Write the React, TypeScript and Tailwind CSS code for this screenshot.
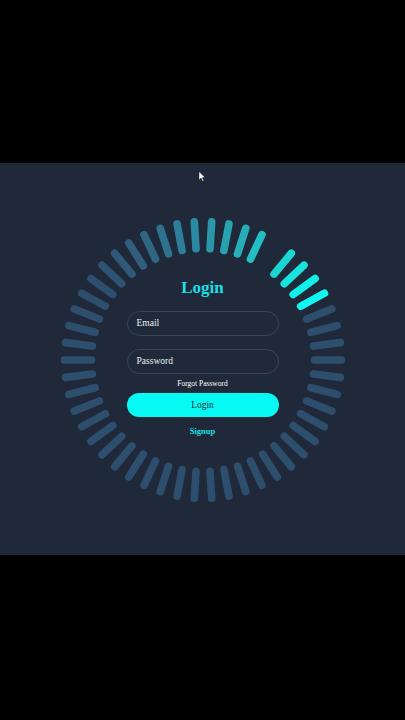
import * as React from "react";

const BASE = "#2e4e6e";

// colours of the lit trail, by bar index (bar 0 sits just right of the top)
const trail: Record<number, string> = {
  8: "#0ff7f0",
  7: "#10efe8",
  6: "#18e3dc",
  5: "#1cd5d0",
  4: "transparent",
  3: "#23bdc2",
  2: "#26afb9",
  1: "#28a2b1",
  0: "#2a96a9",
  49: "#2b8aa1",
  48: "#2d7e98",
  47: "#2f728e",
  46: "#306684",
  45: "#315e7e",
  44: "#305877",
  43: "#2f5373",
};

function Ring() {
  const bars = [...Array(50)].map((_, i) => {
    const a = ((3.6 + 7.2 * i) * Math.PI) / 180;
    const r1 = 111.5;
    const r2 = 138.5;
    return (
      <line
        key={i}
        x1={r1 * Math.sin(a)}
        y1={-r1 * Math.cos(a)}
        x2={r2 * Math.sin(a)}
        y2={-r2 * Math.cos(a)}
        stroke={trail[i] ?? BASE}
        strokeWidth={7.6}
        strokeLinecap="round"
      />
    );
  });
  return (
    <svg width="300" height="300" viewBox="-150 -150 300 300">
      {bars}
    </svg>
  );
}

function Cursor() {
  return (
    <svg
      className="absolute left-[198px] top-[171px]"
      width="8"
      height="11"
      viewBox="0 0 8 11"
    >
      <path d="M1 0.5 L1 9 L3 7 L4.6 10.3 L5.8 9.7 L4.3 6.6 L7 6.4 Z" fill="#fff" stroke="#222" strokeWidth="0.5" />
    </svg>
  );
}

export default function App() {
  return (
    <div
      className="relative w-[405px] h-[720px] bg-black flex flex-col"
      style={{ fontFamily: '"Liberation Serif", "Times New Roman", serif' }}
    >
      <div className="h-[163px]" />
      <div className="h-[392px] bg-[#1f293a] grid place-items-center">
        <div className="col-start-1 row-start-1 pt-[1px]">
          <Ring />
        </div>
        <div className="col-start-1 row-start-1 w-[152px] flex flex-col items-center pb-[4px]">
          <h1 className="text-[17px] leading-[20px] font-bold text-[#1ddfe4]">
            Login
          </h1>
          <div className="mt-[13px] w-full h-[25px] rounded-full border border-[#384558] flex items-center pl-[9px] text-[9.5px] text-[#eef0f3]">
            Email
          </div>
          <div className="mt-[13px] w-full h-[25px] rounded-full border border-[#384558] flex items-center pl-[9px] text-[9.5px] text-[#eef0f3]">
            Password
          </div>
          <div className="mt-[5px] text-[7.5px] leading-[10px] text-white">
            Forgot Password
          </div>
          <div className="mt-[4px] w-full h-[24px] rounded-full bg-[#06faf3] flex items-center justify-center text-[9.5px] text-[#1f293a]">
            Login
          </div>
          <div className="mt-[9px] text-[8.5px] leading-[10px] font-bold text-[#1ddfe4]">
            Signup
          </div>
        </div>
      </div>
      <div className="flex-1" />
      <Cursor />
    </div>
  );
}
